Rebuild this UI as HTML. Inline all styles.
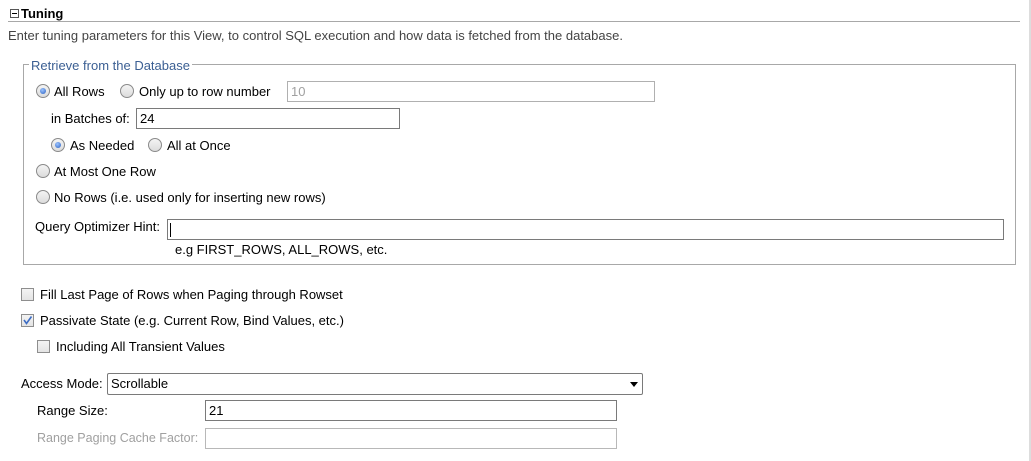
<!DOCTYPE html>
<html><head><meta charset="utf-8"><style>
body{margin:0;width:1031px;height:461px;background:#fff;position:relative;overflow:hidden;font-family:"Liberation Sans",sans-serif;font-size:13px;color:#000}
.a{position:absolute;white-space:nowrap;line-height:15px}
.r{position:absolute;width:14px;height:14px;border-radius:50%;border:1px solid #8a8a8a;background:linear-gradient(#f4f4f4,#dcdcdc);box-sizing:border-box}
.r.on::after{content:"";position:absolute;left:3px;top:3px;width:6px;height:6px;border-radius:50%;background:radial-gradient(circle at 40% 35%,#9cc4ff,#2a5fc0)}
.c{position:absolute;width:13px;height:13px;border:1px solid #8e8e8e;background:linear-gradient(#f3f3f3,#e4e4e4);box-sizing:border-box}
.i{position:absolute;border:1px solid #7a7a7a;box-sizing:border-box;background:#fff;line-height:20px;padding-left:3px}
</style></head><body>
<div style="position:absolute;left:10px;top:9px;width:9px;height:9px;border:1px solid #555;box-sizing:border-box"><div style="position:absolute;left:1px;top:3px;width:5px;height:1px;background:#000"></div></div>
<div class="a" style="left:21px;top:6px;font-weight:bold;font-size:13px">Tuning</div>
<div style="position:absolute;left:8px;top:21px;width:1012px;height:1px;background:#a8a8a8"></div>
<div class="a" style="left:8px;top:28px;color:#444">Enter tuning parameters for this View, to control SQL execution and how data is fetched from the database.</div>
<div style="position:absolute;left:1029px;top:0;width:2px;height:461px;background:#ddd"></div>

<div style="position:absolute;left:23px;top:64px;width:993px;height:201px;border:1px solid #a8a8a8;box-sizing:border-box"></div>
<div class="a" style="left:29px;top:58px;background:#fff;padding:0 2px;color:#3b5f93">Retrieve from the Database</div>

<div class="r on" style="left:36px;top:84px"></div><div class="a" style="left:54px;top:84px">All Rows</div>
<div class="r" style="left:120px;top:84px"></div><div class="a" style="left:139px;top:84px">Only up to row number</div>
<div class="i" style="left:287px;top:81px;width:368px;height:21px;border-color:#b0b0b0;color:#a0a0a0">10</div>

<div class="a" style="left:51px;top:111px">in Batches of:</div>
<div class="i" style="left:136px;top:108px;width:264px;height:21px">24</div>

<div class="r on" style="left:51px;top:138px"></div><div class="a" style="left:70px;top:138px">As Needed</div>
<div class="r" style="left:148px;top:138px"></div><div class="a" style="left:167px;top:138px">All at Once</div>

<div class="r" style="left:36px;top:164px"></div><div class="a" style="left:54px;top:164px">At Most One Row</div>
<div class="r" style="left:36px;top:190px"></div><div class="a" style="left:54px;top:190px">No Rows (i.e. used only for inserting new rows)</div>

<div class="a" style="left:35px;top:219px">Query Optimizer Hint:</div>
<div class="i" style="left:167px;top:219px;width:837px;height:21px"><div style="position:absolute;left:2px;top:3px;width:1px;height:14px;background:#000"></div></div>
<div class="a" style="left:175px;top:242px">e.g FIRST_ROWS, ALL_ROWS, etc.</div>

<div class="c" style="left:21px;top:288px"></div><div class="a" style="left:40px;top:287px">Fill Last Page of Rows when Paging through Rowset</div>
<div class="c" style="left:21px;top:314px"><svg width="11" height="11" style="position:absolute;left:0;top:0"><path d="M2 5 L4.5 8.5 L9.5 1.5" stroke="#3d6dc4" stroke-width="1.6" fill="none"/></svg></div><div class="a" style="left:40px;top:313px">Passivate State (e.g. Current Row, Bind Values, etc.)</div>
<div class="c" style="left:37px;top:340px"></div><div class="a" style="left:56px;top:339px">Including All Transient Values</div>

<div class="a" style="left:21px;top:376px">Access Mode:</div>
<div class="i" style="left:107px;top:373px;width:536px;height:22px;border-radius:2px">Scrollable<div style="position:absolute;right:4px;top:8px;width:0;height:0;border-left:4px solid transparent;border-right:4px solid transparent;border-top:5px solid #000"></div></div>

<div class="a" style="left:37px;top:403px">Range Size:</div>
<div class="i" style="left:205px;top:400px;width:412px;height:21px">21</div>
<div class="a" style="left:37px;top:431px;color:#a0a0a0;font-size:12.5px">Range Paging Cache Factor:</div>
<div class="i" style="left:205px;top:428px;width:412px;height:21px;border-color:#b8b8b8"></div>
</body></html>
